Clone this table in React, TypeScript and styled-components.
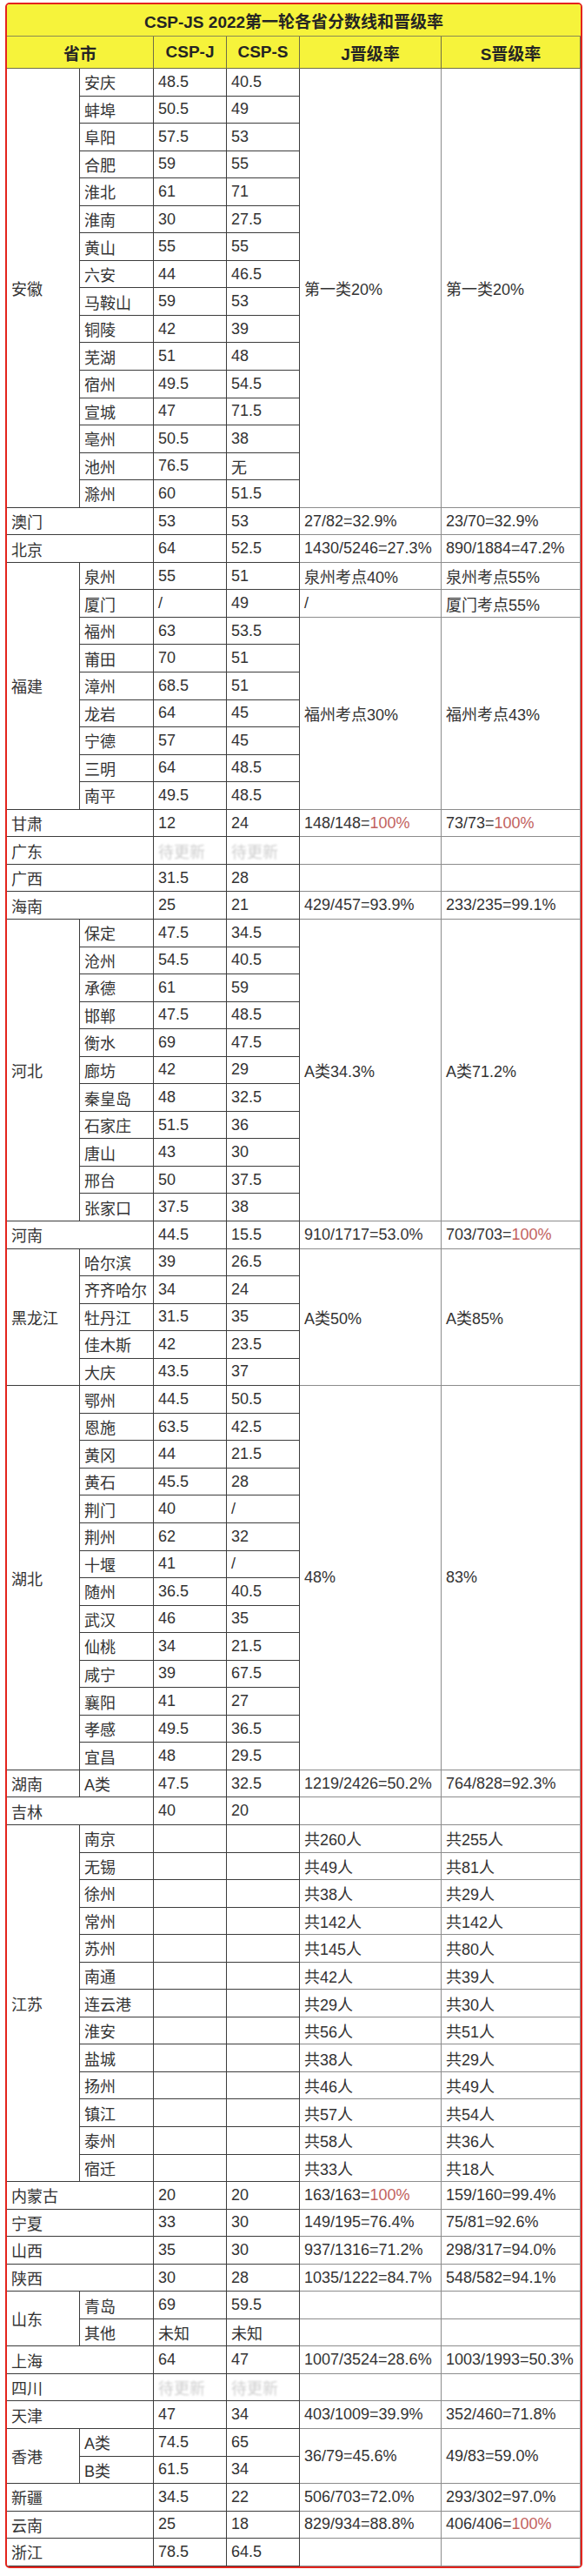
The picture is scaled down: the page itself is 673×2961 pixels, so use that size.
import React from 'react';
import styled, { createGlobalStyle } from 'styled-components';

const GlobalStyle = createGlobalStyle`
  html, body { margin: 0; padding: 0; background: #ffffff; }
  body { font-family: "Liberation Sans", "Noto Sans CJK SC", sans-serif; }
`;

const Page = styled.div`
  width: 673px;
  padding: 3px 0 0 6px;
  box-sizing: border-box;
`;

const Frame = styled.div`
  width: 664px;
  border: 2px solid #e3241d;
  border-radius: 5px;
  box-sizing: border-box;
  overflow: hidden;
`;

const Grid = styled.div`
  display: grid;
  grid-template-columns: 84px 85px 84px 84px 163px 160px;
  grid-template-rows: 37px 37px repeat(91, 31.56px);
`;

const Title = styled.div`
  grid-column: 1 / -1;
  background: #f6f33b;
  border-bottom: 1px solid #8a8950;
  display: flex;
  align-items: center;
  justify-content: center;
  font-weight: 700;
  font-size: 19px;
  color: #242424;
`;

const HeadCell = styled.div<{ $span?: number }>`
  grid-column: span ${(p) => p.$span ?? 1};
  background: #f6f33b;
  border-bottom: 1px solid #6f6e46;
  border-right: 1px solid #6f6e46;
  box-sizing: border-box;
  display: flex;
  align-items: center;
  justify-content: center;
  font-weight: 700;
  font-size: 19px;
  color: #242424;
`;

type Tone = 'dark' | 'light';

const Cell = styled.div<{ $rows?: number; $cols?: number; $tone?: Tone }>`
  grid-row: span ${(p) => p.$rows ?? 1};
  grid-column: span ${(p) => p.$cols ?? 1};
  box-sizing: border-box;
  display: flex;
  align-items: center;
  padding-left: 5px;
  border-right: 1px solid ${(p) => (p.$tone === 'light' ? '#8c8c8c' : '#3c3c3c')};
  border-bottom: 1px solid ${(p) => (p.$tone === 'light' ? '#8c8c8c' : '#3c3c3c')};
  font-size: 18px;
  color: #333333;
  white-space: nowrap;
  overflow: hidden;
`;

const RedText = styled.span`
  color: #c2625d;
`;

const Pending = styled.span`
  color: #cfcfcf;
  filter: blur(1.3px);
`;

type City = [string, string, string];
type Span = [string, number];

interface Single {
  kind: 'single';
  name: string;
  j: string;
  s: string;
  jr: string;
  sr: string;
}

interface Group {
  kind: 'group';
  name: string;
  cities: City[];
  jr: Span[];
  sr: Span[];
}

type Entry = Single | Group;

const P = '__pending__';

const single = (name: string, j: string, s: string, jr = '', sr = ''): Single => ({
  kind: 'single',
  name,
  j,
  s,
  jr,
  sr,
});

const data: Entry[] = [
  {
    kind: 'group',
    name: '安徽',
    cities: [
      ['安庆', '48.5', '40.5'],
      ['蚌埠', '50.5', '49'],
      ['阜阳', '57.5', '53'],
      ['合肥', '59', '55'],
      ['淮北', '61', '71'],
      ['淮南', '30', '27.5'],
      ['黄山', '55', '55'],
      ['六安', '44', '46.5'],
      ['马鞍山', '59', '53'],
      ['铜陵', '42', '39'],
      ['芜湖', '51', '48'],
      ['宿州', '49.5', '54.5'],
      ['宣城', '47', '71.5'],
      ['亳州', '50.5', '38'],
      ['池州', '76.5', '无'],
      ['滁州', '60', '51.5'],
    ],
    jr: [['第一类20%', 16]],
    sr: [['第一类20%', 16]],
  },
  single('澳门', '53', '53', '27/82=32.9%', '23/70=32.9%'),
  single('北京', '64', '52.5', '1430/5246=27.3%', '890/1884=47.2%'),
  {
    kind: 'group',
    name: '福建',
    cities: [
      ['泉州', '55', '51'],
      ['厦门', '/', '49'],
      ['福州', '63', '53.5'],
      ['莆田', '70', '51'],
      ['漳州', '68.5', '51'],
      ['龙岩', '64', '45'],
      ['宁德', '57', '45'],
      ['三明', '64', '48.5'],
      ['南平', '49.5', '48.5'],
    ],
    jr: [
      ['泉州考点40%', 1],
      ['/', 1],
      ['福州考点30%', 7],
    ],
    sr: [
      ['泉州考点55%', 1],
      ['厦门考点55%', 1],
      ['福州考点43%', 7],
    ],
  },
  single('甘肃', '12', '24', '148/148=100%', '73/73=100%'),
  single('广东', P, P),
  single('广西', '31.5', '28'),
  single('海南', '25', '21', '429/457=93.9%', '233/235=99.1%'),
  {
    kind: 'group',
    name: '河北',
    cities: [
      ['保定', '47.5', '34.5'],
      ['沧州', '54.5', '40.5'],
      ['承德', '61', '59'],
      ['邯郸', '47.5', '48.5'],
      ['衡水', '69', '47.5'],
      ['廊坊', '42', '29'],
      ['秦皇岛', '48', '32.5'],
      ['石家庄', '51.5', '36'],
      ['唐山', '43', '30'],
      ['邢台', '50', '37.5'],
      ['张家口', '37.5', '38'],
    ],
    jr: [['A类34.3%', 11]],
    sr: [['A类71.2%', 11]],
  },
  single('河南', '44.5', '15.5', '910/1717=53.0%', '703/703=100%'),
  {
    kind: 'group',
    name: '黑龙江',
    cities: [
      ['哈尔滨', '39', '26.5'],
      ['齐齐哈尔', '34', '24'],
      ['牡丹江', '31.5', '35'],
      ['佳木斯', '42', '23.5'],
      ['大庆', '43.5', '37'],
    ],
    jr: [['A类50%', 5]],
    sr: [['A类85%', 5]],
  },
  {
    kind: 'group',
    name: '湖北',
    cities: [
      ['鄂州', '44.5', '50.5'],
      ['恩施', '63.5', '42.5'],
      ['黄冈', '44', '21.5'],
      ['黄石', '45.5', '28'],
      ['荆门', '40', '/'],
      ['荆州', '62', '32'],
      ['十堰', '41', '/'],
      ['随州', '36.5', '40.5'],
      ['武汉', '46', '35'],
      ['仙桃', '34', '21.5'],
      ['咸宁', '39', '67.5'],
      ['襄阳', '41', '27'],
      ['孝感', '49.5', '36.5'],
      ['宜昌', '48', '29.5'],
    ],
    jr: [['48%', 14]],
    sr: [['83%', 14]],
  },
  {
    kind: 'group',
    name: '湖南',
    cities: [['A类', '47.5', '32.5']],
    jr: [['1219/2426=50.2%', 1]],
    sr: [['764/828=92.3%', 1]],
  },
  single('吉林', '40', '20'),
  {
    kind: 'group',
    name: '江苏',
    cities: [
      ['南京', '', ''],
      ['无锡', '', ''],
      ['徐州', '', ''],
      ['常州', '', ''],
      ['苏州', '', ''],
      ['南通', '', ''],
      ['连云港', '', ''],
      ['淮安', '', ''],
      ['盐城', '', ''],
      ['扬州', '', ''],
      ['镇江', '', ''],
      ['泰州', '', ''],
      ['宿迁', '', ''],
    ],
    jr: [
      ['共260人', 1],
      ['共49人', 1],
      ['共38人', 1],
      ['共142人', 1],
      ['共145人', 1],
      ['共42人', 1],
      ['共29人', 1],
      ['共56人', 1],
      ['共38人', 1],
      ['共46人', 1],
      ['共57人', 1],
      ['共58人', 1],
      ['共33人', 1],
    ],
    sr: [
      ['共255人', 1],
      ['共81人', 1],
      ['共29人', 1],
      ['共142人', 1],
      ['共80人', 1],
      ['共39人', 1],
      ['共30人', 1],
      ['共51人', 1],
      ['共29人', 1],
      ['共49人', 1],
      ['共54人', 1],
      ['共36人', 1],
      ['共18人', 1],
    ],
  },
  single('内蒙古', '20', '20', '163/163=100%', '159/160=99.4%'),
  single('宁夏', '33', '30', '149/195=76.4%', '75/81=92.6%'),
  single('山西', '35', '30', '937/1316=71.2%', '298/317=94.0%'),
  single('陕西', '30', '28', '1035/1222=84.7%', '548/582=94.1%'),
  {
    kind: 'group',
    name: '山东',
    cities: [
      ['青岛', '69', '59.5'],
      ['其他', '未知', '未知'],
    ],
    jr: [
      ['', 1],
      ['', 1],
    ],
    sr: [
      ['', 1],
      ['', 1],
    ],
  },
  single('上海', '64', '47', '1007/3524=28.6%', '1003/1993=50.3%'),
  single('四川', P, P),
  single('天津', '47', '34', '403/1009=39.9%', '352/460=71.8%'),
  {
    kind: 'group',
    name: '香港',
    cities: [
      ['A类', '74.5', '65'],
      ['B类', '61.5', '34'],
    ],
    jr: [['36/79=45.6%', 2]],
    sr: [['49/83=59.0%', 2]],
  },
  single('新疆', '34.5', '22', '506/703=72.0%', '293/302=97.0%'),
  single('云南', '25', '18', '829/934=88.8%', '406/406=100%'),
  single('浙江', '78.5', '64.5'),
];

function renderValue(t: string): React.ReactNode {
  if (t === P) return <Pending>待更新</Pending>;
  const i = t.indexOf('100%');
  if (i < 0) return t;
  return (
    <>
      {t.slice(0, i)}
      <RedText>100%</RedText>
    </>
  );
}

function spanStarts(spans: Span[]): Map<number, Span> {
  const m = new Map<number, Span>();
  let at = 0;
  spans.forEach((sp) => {
    m.set(at, sp);
    at += sp[1];
  });
  return m;
}

function buildCells(): React.ReactNode[] {
  const out: React.ReactNode[] = [];
  data.forEach((e, gi) => {
    if (e.kind === 'single') {
      out.push(
        <Cell key={`${gi}-n`} $cols={2}>
          {e.name}
        </Cell>,
        <Cell key={`${gi}-j`}>{renderValue(e.j)}</Cell>,
        <Cell key={`${gi}-s`}>{renderValue(e.s)}</Cell>,
        <Cell key={`${gi}-jr`} $tone="light">
          {renderValue(e.jr)}
        </Cell>,
        <Cell key={`${gi}-sr`} $tone="light">
          {renderValue(e.sr)}
        </Cell>,
      );
      return;
    }
    const jStarts = spanStarts(e.jr);
    const sStarts = spanStarts(e.sr);
    e.cities.forEach((c, ci) => {
      if (ci === 0) {
        out.push(
          <Cell key={`${gi}-n`} $rows={e.cities.length}>
            {e.name}
          </Cell>,
        );
      }
      out.push(
        <Cell key={`${gi}-${ci}-c`}>{c[0]}</Cell>,
        <Cell key={`${gi}-${ci}-j`}>{renderValue(c[1])}</Cell>,
        <Cell key={`${gi}-${ci}-s`}>{renderValue(c[2])}</Cell>,
      );
      const js = jStarts.get(ci);
      if (js) {
        out.push(
          <Cell key={`${gi}-${ci}-jr`} $rows={js[1]} $tone="light">
            {renderValue(js[0])}
          </Cell>,
        );
      }
      const ss = sStarts.get(ci);
      if (ss) {
        out.push(
          <Cell key={`${gi}-${ci}-sr`} $rows={ss[1]} $tone="light">
            {renderValue(ss[0])}
          </Cell>,
        );
      }
    });
  });
  return out;
}

export default function App() {
  return (
    <>
      <GlobalStyle />
      <Page>
        <Frame>
          <Grid>
            <Title>CSP-JS 2022第一轮各省分数线和晋级率</Title>
            <HeadCell $span={2}>省市</HeadCell>
            <HeadCell>CSP-J</HeadCell>
            <HeadCell>CSP-S</HeadCell>
            <HeadCell>J晋级率</HeadCell>
            <HeadCell>S晋级率</HeadCell>
            {buildCells()}
          </Grid>
        </Frame>
      </Page>
    </>
  );
}
